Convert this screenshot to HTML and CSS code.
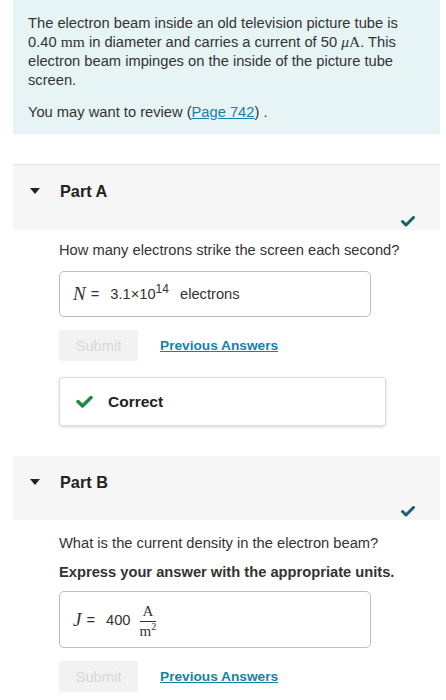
FILE: index.html
```html
<!DOCTYPE html>
<html>
<head>
<meta charset="utf-8">
<link rel="stylesheet" href="styles.css">
</head>
<body>
<div class="page">
  <div class="intro">
    <p class="intro-p">The electron beam inside an old television picture tube is 0.40&nbsp;<span class="m">mm</span> in diameter and carries a current of 50&nbsp;<span class="m"><i>μ</i>A</span>. This electron beam impinges on the inside of the picture tube screen.</p>
    <p class="intro-p review">You may want to review (<a class="link" href="#">Page 742</a>) .</p>
  </div>

  <section class="part first">
    <div class="part-head">
      <div class="title-row">
        <span class="tri"></span>
        <span class="part-title">Part A</span>
      </div>
      <div class="check-row">
        <svg class="done" width="14" height="11" viewBox="0 0 14 11"><path d="M1.5 5.5 L5 9 L12.5 1.5" fill="none" stroke="#1c5e6e" stroke-width="3" stroke-linecap="round" stroke-linejoin="round"/></svg>
      </div>
    </div>
    <div class="part-body">
      <p class="question">How many electrons strike the screen each second?</p>
      <div class="answer a1">
        <span class="var">N</span><span class="eq">=</span><span class="val">3.1×10<sup>14</sup></span><span class="unit">electrons</span>
      </div>
      <div class="actions">
        <span class="submit">Submit</span>
        <a class="prev" href="#">Previous Answers</a>
      </div>
      <div class="correct">
        <svg class="ok" width="17" height="13" viewBox="0 0 17 13"><path d="M2 6.5 L6.5 11 L15 2.5" fill="none" stroke="#1f8a3e" stroke-width="3.4" stroke-linecap="round" stroke-linejoin="round"/></svg>
        <span class="correct-text">Correct</span>
      </div>
    </div>
  </section>

  <section class="part second">
    <div class="part-head">
      <div class="title-row">
        <span class="tri"></span>
        <span class="part-title">Part B</span>
      </div>
      <div class="check-row">
        <svg class="done" width="14" height="11" viewBox="0 0 14 11"><path d="M1.5 5.5 L5 9 L12.5 1.5" fill="none" stroke="#1c5e6e" stroke-width="3" stroke-linecap="round" stroke-linejoin="round"/></svg>
      </div>
    </div>
    <div class="part-body">
      <p class="question qb">What is the current density in the electron beam?</p>
      <p class="instr">Express your answer with the appropriate units.</p>
      <div class="answer a2">
        <span class="var">J</span><span class="eq">=</span><span class="val">400</span>
        <span class="frac"><span class="num">A</span><span class="den">m<sup>2</sup></span></span>
      </div>
      <div class="actions">
        <span class="submit">Submit</span>
        <a class="prev" href="#">Previous Answers</a>
      </div>
    </div>
  </section>
</div>
</body>
</html>
```

FILE: styles.css
```css
* { box-sizing: border-box; }
html, body { margin: 0; padding: 0; background: #fff; }
body {
  font-family: "Liberation Sans", Arial, Helvetica, sans-serif;
  color: #333;
  font-size: 14.7px;
}
.page {
  padding: 0 6px 0 13px;
  width: 446px;
}
.intro {
  background: #e6f4f5;
  padding: 14px 12px 12px 15px;
}
.intro-p {
  margin: 0;
  line-height: 19px;
  font-size: 14.7px;
}
.review { margin-top: 13px; }
.m {
  font-family: "Liberation Serif", "Times New Roman", serif;
  font-size: 15.5px;
  line-height: 1;
}
.link { color: #1a7fa3; text-decoration: underline; }

.part.first { margin-top: 30px; border-top: 1px solid #e3e3e3; }
.part.second { margin-top: 30px; }
.part-head {
  background: #f6f6f6;
  padding: 17px 25px 3px 17px;
  display: flex;
  flex-direction: column;
}
.title-row {
  display: flex;
  align-items: center;
  height: 18px;
}
.tri {
  width: 0; height: 0;
  border-left: 5.5px solid transparent;
  border-right: 5.5px solid transparent;
  border-top: 6px solid #222;
  margin-right: 20px;
}
.part-title {
  font-weight: bold;
  font-size: 16.3px;
  color: #222;
}
.check-row {
  display: flex;
  justify-content: flex-end;
  margin-top: 16px;
  height: 11px;
}
.part.second .check-row { margin-top: 15px; }

.part-body { padding-left: 46px; }
.question {
  margin: 11px 0 0;
  line-height: 18px;
  font-size: 14.7px;
}
.question.qb { margin-top: 14px; }
.instr {
  margin: 11px 0 0;
  line-height: 18px;
  font-weight: bold;
  font-size: 14.7px;
}
.answer {
  width: 312px;
  border: 1px solid #bdbdbd;
  border-radius: 5px;
  display: flex;
  align-items: center;
  padding-left: 13px;
  color: #333;
}
.a1 { height: 46px; margin-top: 12px; }
.a2 { height: 57px; margin-top: 10px; }
.var {
  font-family: "Liberation Serif", "Times New Roman", serif;
  font-style: italic;
  font-size: 19px;
  margin-right: 5px;
}
.eq { font-size: 14.7px; margin-right: 11px; }
.val { font-size: 14.7px; }
.val sup { font-size: 12px; vertical-align: 6px; line-height: 0; }
.unit { margin-left: 11px; font-size: 14.7px; }
.frac {
  display: inline-flex;
  flex-direction: column;
  align-items: center;
  margin-left: 9px;
  margin-top: 3px;
  font-family: "Liberation Serif", "Times New Roman", serif;
  font-size: 15px;
  line-height: 15px;
}
.num { border-bottom: 1px solid #333; padding: 0 3px 2px; }
.den { padding-top: 2px; }
.den sup { font-size: 10px; vertical-align: 6px; line-height: 0; }

.actions {
  display: flex;
  align-items: center;
  margin-top: 13px;
}
.submit {
  width: 79px;
  height: 31px;
  background: #f2f2f2;
  color: #d8d8d8;
  display: flex;
  align-items: center;
  justify-content: center;
  font-size: 14.7px;
  border-radius: 2px;
}
.prev {
  margin-left: 22px;
  color: #1a7fa3;
  font-weight: bold;
  font-size: 13.7px;
  text-decoration: underline;
}
.correct {
  margin-top: 16px;
  width: 327px;
  height: 49px;
  border: 1px solid #dcdcdc;
  border-radius: 4px;
  box-shadow: 0 1px 3px rgba(0,0,0,0.18);
  display: flex;
  align-items: center;
  padding-left: 16px;
}
.ok { margin-right: 15px; }
.correct-text {
  font-weight: bold;
  font-size: 15.5px;
  color: #222;
}
```
